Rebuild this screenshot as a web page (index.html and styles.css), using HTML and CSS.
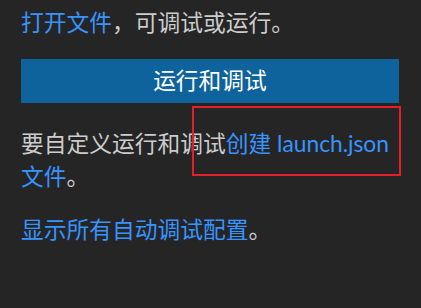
FILE: index.html
```html
<!DOCTYPE html>
<html lang="zh-CN">
<head>
<meta charset="utf-8">
<link rel="stylesheet" href="styles.css">
</head>
<body>
<div class="view">
  <p class="para first"><a class="link">打开文件</a>，可调试或运行。</p>
  <div class="button">运行和调试</div>
  <p class="para">要自定义运行和调试<a class="link">创建 launch.json 文件</a>。</p>
  <p class="para"><a class="link">显示所有自动调试配置</a>。</p>
  <div class="highlight"></div>
</div>
</body>
</html>
```
FILE: styles.css
```css
html, body {
  margin: 0;
  padding: 0;
  background: #252526;
  width: 421px;
  height: 308px;
  overflow: hidden;
}
.view {
  position: relative;
  padding: 6px 22px 0 21px;
  font-family: "Lato", "Noto Sans CJK SC", sans-serif;
  font-size: 22.75px;
  line-height: 33px;
  color: #cccccc;
}
.para {
  margin: 0 0 20px 0;
}
.link {
  color: #3794ff;
  text-decoration: none;
}
.button {
  height: 44px;
  line-height: 44px;
  background: #0e639c;
  color: #ffffff;
  text-align: center;
  margin: 0 0 24px 0;
}
.highlight {
  position: absolute;
  left: 192px;
  top: 106px;
  width: 205px;
  height: 66px;
  border: 2px solid #e3202a;
}
```
